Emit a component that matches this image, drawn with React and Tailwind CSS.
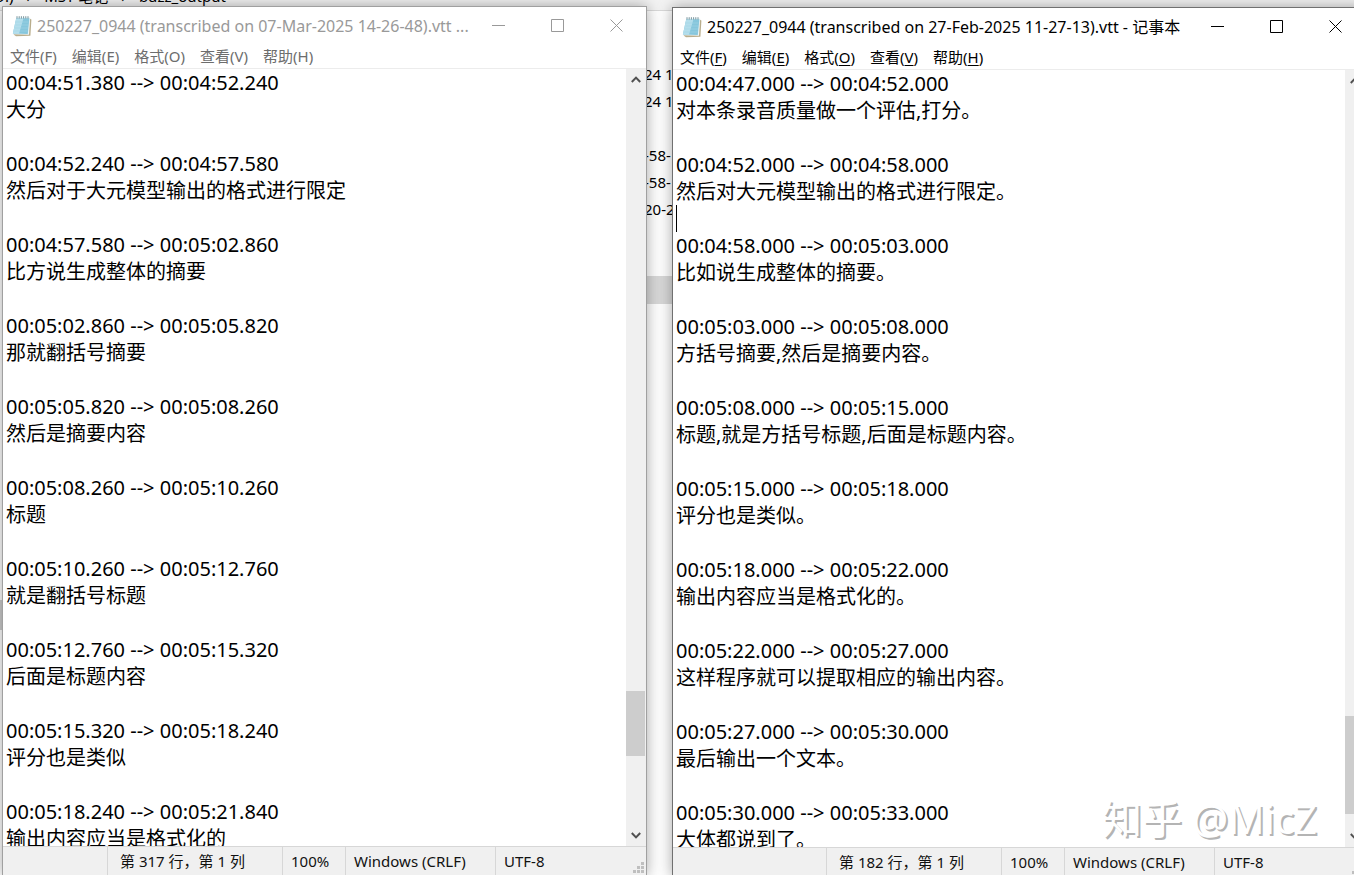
import React from "react";

const LEFT_TEXT = `00:04:51.380 --> 00:04:52.240
大分

00:04:52.240 --> 00:04:57.580
然后对于大元模型输出的格式进行限定

00:04:57.580 --> 00:05:02.860
比方说生成整体的摘要

00:05:02.860 --> 00:05:05.820
那就翻括号摘要

00:05:05.820 --> 00:05:08.260
然后是摘要内容

00:05:08.260 --> 00:05:10.260
标题

00:05:10.260 --> 00:05:12.760
就是翻括号标题

00:05:12.760 --> 00:05:15.320
后面是标题内容

00:05:15.320 --> 00:05:18.240
评分也是类似

00:05:18.240 --> 00:05:21.840
输出内容应当是格式化的`;

const RIGHT_TEXT = `00:04:47.000 --> 00:04:52.000
对本条录音质量做一个评估,打分。

00:04:52.000 --> 00:04:58.000
然后对大元模型输出的格式进行限定。

00:04:58.000 --> 00:05:03.000
比如说生成整体的摘要。

00:05:03.000 --> 00:05:08.000
方括号摘要,然后是摘要内容。

00:05:08.000 --> 00:05:15.000
标题,就是方括号标题,后面是标题内容。

00:05:15.000 --> 00:05:18.000
评分也是类似。

00:05:18.000 --> 00:05:22.000
输出内容应当是格式化的。

00:05:22.000 --> 00:05:27.000
这样程序就可以提取相应的输出内容。

00:05:27.000 --> 00:05:30.000
最后输出一个文本。

00:05:30.000 --> 00:05:33.000
大体都说到了。`;

const MENUS = [
  ["文件", "F"],
  ["编辑", "E"],
  ["格式", "O"],
  ["查看", "V"],
  ["帮助", "H"],
];

function NotepadIcon() {
  return (
    <svg width="20" height="22" viewBox="0 0 20 22" aria-hidden="true" className="shrink-0">
      <path d="M17.6 3.5 L19.4 4.6 L18.4 20.8 L4 21.2 L1.6 19.4 Z" fill="#b9ad8c" />
      <path d="M4.4 2.6 L18.2 2.6 L17 19.8 L0.8 19.2 Z" fill="#eaf5f8" />
      <path d="M4.2 3.2 L17.4 3.2 L15.8 19 L0.9 18.6 Z" fill="#86c6dc" />
      <path d="M4.2 3.2 L11.5 3.2 L7 18.8 L0.9 18.6 Z" fill="#b4deec" />
      <path d="M3.8 7h12.8M3.4 10h12.8M2.8 13h13M2.2 16h13.4" stroke="#a3d4e5" strokeWidth="0.6" />
      <path d="M5 1.2v2.4M7.2 1.2v2.4M9.4 1.2v2.4M11.6 1.2v2.4M13.8 1.2v2.4M16 1.2v2.4" stroke="#7b969e" strokeWidth="1" />
    </svg>
  );
}

function CaptionButton({ label, children }) {
  return (
    <button type="button" aria-label={label} className="flex h-9 w-[59px] items-center justify-center">
      <svg width="13" height="13" viewBox="0 0 13 13" fill="none" stroke="currentColor" aria-hidden="true">
        {children}
      </svg>
    </button>
  );
}

function Scrollbar({ thumb }) {
  return (
    <div className="flex w-5 shrink-0 flex-col bg-[#f0f0f0] text-[#505050]">
      <button type="button" aria-label="向上滚动" className="flex h-[21px] items-center justify-center">
        <svg width="10" height="7" viewBox="0 0 10 7" fill="none" stroke="currentColor" strokeWidth="2" aria-hidden="true">
          <path d="M0.8 6 L5 1.6 L9.2 6" />
        </svg>
      </button>
      <div className="relative flex-1">
        <div className={`absolute left-0 right-px bg-[#cdcdcd] ${thumb}`} />
      </div>
      <button type="button" aria-label="向下滚动" className="flex h-[21px] items-center justify-center">
        <svg width="10" height="7" viewBox="0 0 10 7" fill="none" stroke="currentColor" strokeWidth="2" aria-hidden="true">
          <path d="M0.8 1 L5 5.4 L9.2 1" />
        </svg>
      </button>
    </div>
  );
}

function NotepadWindow({ title, text, position, active, thumb, caret }) {
  return (
    <section
      aria-label={title}
      className={`absolute flex flex-col border bg-white shadow-[0_0_14px_rgba(0,0,0,0.35)] ${position} ${
        active ? "border-[#707070]" : "border-[#a0a0a0]"
      }`}
    >
      <header className={`flex h-[37px] shrink-0 items-center pl-[9px] ${active ? "text-black" : "text-[#999999]"}`}>
        <NotepadIcon />
        <h1 className="min-w-0 flex-1 whitespace-nowrap pl-[5px] text-[16px] leading-6">{title}</h1>
        <CaptionButton label="最小化">
          <path d="M0 6.5h13" />
        </CaptionButton>
        <CaptionButton label="最大化">
          <path d="M0.5 0.5h12v12h-12z" />
        </CaptionButton>
        <CaptionButton label="关闭">
          <path d="M0.5 0.5l12 12M12.5 0.5l-12 12" />
        </CaptionButton>
      </header>
      <nav
        className={`flex h-[25px] shrink-0 items-center gap-[15px] border-b border-[#ececec] pl-[7px] text-[15px] leading-5 ${
          active ? "text-black" : "text-[#6d6d6d]"
        }`}
      >
        {MENUS.map(([name, key]) => (
          <button key={key} type="button" className="whitespace-nowrap">
            {name}({active ? <u className="underline-offset-2">{key}</u> : key})
          </button>
        ))}
      </nav>
      <div className="flex min-h-0 flex-1">
        <div className="relative flex min-w-0 flex-1">
          <textarea
            aria-label={title}
            defaultValue={text}
            wrap="off"
            spellCheck={false}
            className="min-w-0 flex-1 resize-none overflow-hidden bg-transparent pl-[3px] text-[20px] leading-[27px] text-black outline-none"
          />
          {caret && <span className="absolute left-[3px] top-[135px] h-[27px] w-px bg-black" />}
        </div>
        <Scrollbar thumb={thumb} />
      </div>
      <footer className="flex h-[29px] shrink-0 items-center justify-end border-t border-[#d7d7d7] bg-[#f0f0f0] text-[15px] leading-5 text-[#111111]">
        <span className="flex h-full w-[175px] items-center border-l border-[#d7d7d7] pl-3">
          {active ? "第 182 行，第 1 列" : "第 317 行，第 1 列"}
        </span>
        <span className="flex h-full w-[63px] items-center border-l border-[#d7d7d7] pl-2">100%</span>
        <span className="flex h-full w-[150px] items-center border-l border-[#d7d7d7] pl-2">Windows (CRLF)</span>
        <span className="flex h-full w-[151px] items-center justify-between border-l border-[#d7d7d7] pl-2">
          UTF-8
          <svg width="13" height="13" viewBox="0 0 13 13" fill="#bfbfbf" aria-hidden="true" className="self-end">
            <path d="M8 0h3v3h-3zM8 4h3v3h-3zM4 4h3v3h-3zM8 8h3v3h-3zM4 8h3v3h-3zM0 8h3v3h-3z" />
          </svg>
        </span>
      </footer>
    </section>
  );
}

export default function App() {
  return (
    <main className="relative h-screen w-full overflow-hidden bg-white font-['Noto_Sans','Noto_Sans_CJK_SC',sans-serif] text-black">
      <div className="h-[11px] border-b border-[#d9d9d9] bg-[#f3f3f3]" />
      <p className="absolute -left-[6px] -top-[14px] flex gap-[13px] whitespace-pre text-[15px] leading-5">
        <span>D:)</span>
        <span>›</span>
        <span>MST 笔记</span>
        <span>›</span>
        <span>buzz_output</span>
      </p>
      <ul className="absolute left-[644px] top-[61px] w-9 text-[15px] leading-[27px] whitespace-nowrap">
        <li>24 1</li>
        <li>24 1</li>
        <li>&nbsp;</li>
        <li>-58-</li>
        <li>-58-</li>
        <li>20-2</li>
      </ul>
      <div className="absolute left-[640px] top-[276px] h-7 w-10 bg-[#d9d9d9]" />
      <div className="absolute left-0 top-[600px] h-[30px] w-1 bg-[#cdcdcd]" />

      <NotepadWindow
        title="250227_0944 (transcribed on 07-Mar-2025 14-26-48).vtt ..."
        text={LEFT_TEXT}
        position="left-[2px] right-[707px] top-[6px] -bottom-px"
        thumb="top-[601px] h-[65px]"
      />
      <NotepadWindow
        title="250227_0944 (transcribed on 27-Feb-2025 11-27-13).vtt - 记事本"
        text={RIGHT_TEXT}
        position="left-[672px] -right-[12px] top-[7px] -bottom-[2px]"
        thumb="top-[625px] h-[98px]"
        active
        caret
      />

      <p className="absolute right-[37px] bottom-[29px] text-[40px] leading-[54px] text-white [text-shadow:2px_2px_0_#b4b4b4]">
        知乎 @MicZ
      </p>
    </main>
  );
}
